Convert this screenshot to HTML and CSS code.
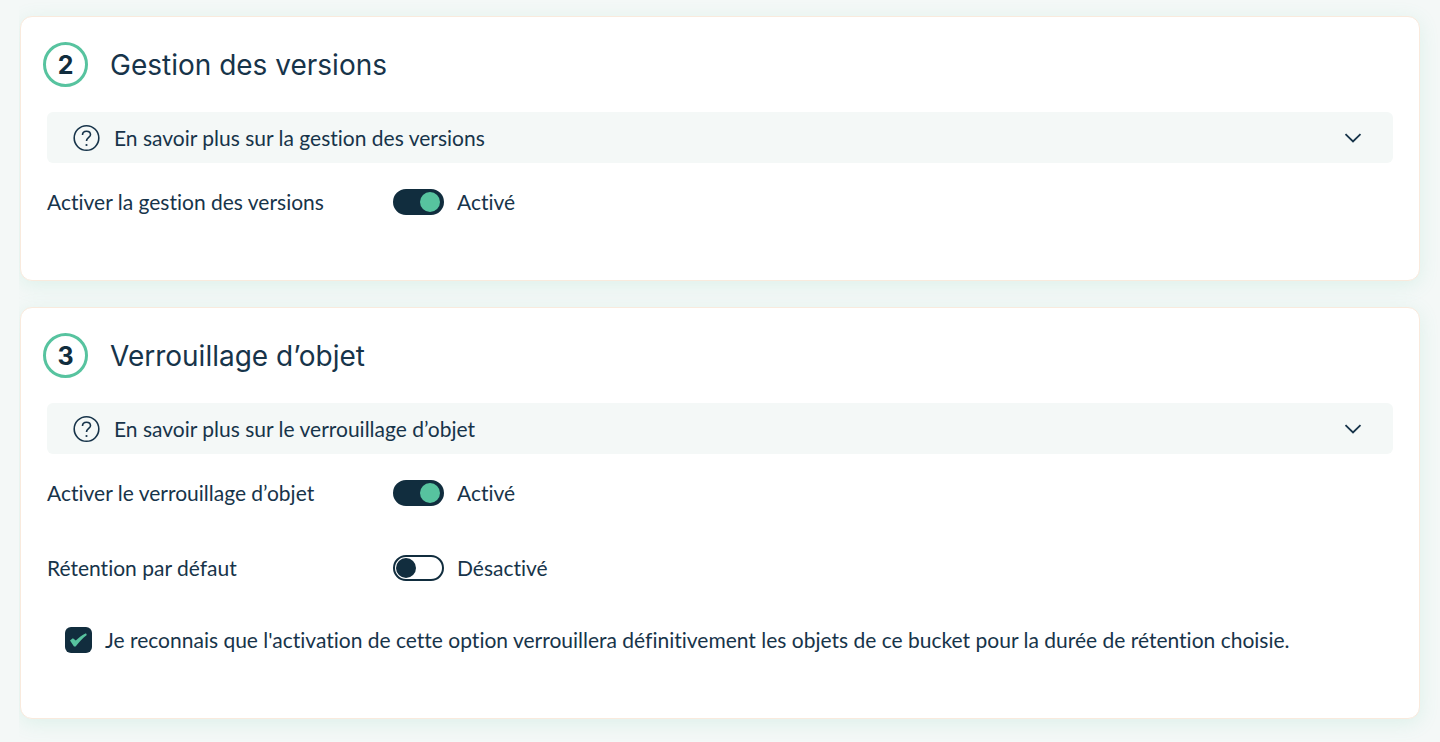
FILE: index.html
```html
<!DOCTYPE html>
<html lang="fr">
<head>
<meta charset="utf-8">
<title>Gestion des versions</title>
<link rel="stylesheet" href="styles.css">
</head>
<body>
<main class="steps">
  <section class="card">
    <header class="card-header">
      <span class="step">2</span>
      <h2 class="title">Gestion des versions</h2>
    </header>
    <button class="help" type="button" aria-expanded="false">
      <svg class="help-icon" viewBox="0 0 28 28" aria-hidden="true"><circle cx="13.500" cy="14" r="12.300"/><path d="M9.500 11C9.500 8.600 11.200 7.200 13.500 7.200S17.500 8.600 17.500 10.700C17.500 13.300 13.500 13.600 13.500 17"/><circle class="dot" cx="13.500" cy="21" r="1.100"/></svg>
      <span class="help-text">En savoir plus sur la gestion des versions</span>
      <svg class="chevron" viewBox="0 0 18 10" aria-hidden="true"><path d="M1.500 1.200 9 8.500 16.500 1.200"/></svg>
    </button>
    <div class="field">
      <label class="field-label" for="versions">Activer la gestion des versions</label>
      <input class="switch" type="checkbox" role="switch" id="versions" checked>
      <span class="state">Activé</span>
    </div>
  </section>
  <section class="card">
    <header class="card-header">
      <span class="step">3</span>
      <h2 class="title">Verrouillage d’objet</h2>
    </header>
    <button class="help" type="button" aria-expanded="false">
      <svg class="help-icon" viewBox="0 0 28 28" aria-hidden="true"><circle cx="13.500" cy="14" r="12.300"/><path d="M9.500 11C9.500 8.600 11.200 7.200 13.500 7.200S17.500 8.600 17.500 10.700C17.500 13.300 13.500 13.600 13.500 17"/><circle class="dot" cx="13.500" cy="21" r="1.100"/></svg>
      <span class="help-text">En savoir plus sur le verrouillage d’objet</span>
      <svg class="chevron" viewBox="0 0 18 10" aria-hidden="true"><path d="M1.500 1.200 9 8.500 16.500 1.200"/></svg>
    </button>
    <div class="field">
      <label class="field-label" for="lock">Activer le verrouillage d’objet</label>
      <input class="switch" type="checkbox" role="switch" id="lock" checked>
      <span class="state">Activé</span>
    </div>
    <div class="field">
      <label class="field-label" for="retention">Rétention par défaut</label>
      <input class="switch" type="checkbox" role="switch" id="retention">
      <span class="state">Désactivé</span>
    </div>
    <div class="consent">
      <span class="check">
        <input class="check-input" type="checkbox" id="ack" checked>
        <svg class="check-mark" viewBox="0 0 27 26" aria-hidden="true"><path d="M5 13.600 7.900 11.300 10.800 13.600C13.800 10.400 16.800 8 21 6.200L21.800 8C17.500 11.300 14.300 14.800 10.600 19.600L9 19.400Z"/></svg>
      </span>
      <label for="ack">Je reconnais que l'activation de cette option verrouillera définitivement les objets de ce bucket pour la durée de rétention choisie.</label>
    </div>
  </section>
</main>
</body>
</html>
```
FILE: styles.css
```css
* { box-sizing: border-box; }

body {
  margin: 0;
  background: #f4f8f7;
  color: #17344a;
  font-family: Lato, "Liberation Sans", sans-serif;
  font-size: 21px;
  font-variant-ligatures: none;
  line-height: 24px;
}

.steps {
  display: flex;
  flex-direction: column;
  gap: 26px;
  margin-left: 19px;
  padding: 16px 20px 23px 1px;
  overflow: hidden;
}

.card {
  padding: 25px 26px 65px;
  border: 1px solid #f9eadd;
  border-radius: 12px;
  background: #fff;
  box-shadow: 0 4px 20px rgba(87, 195, 159, 0.14);
}

.card-header {
  display: flex;
  align-items: center;
  gap: 22px;
  margin: 0 0 25px -4px;
}

.step {
  display: grid;
  place-items: center;
  width: 45px;
  height: 45px;
  border: 3px solid #57c39f;
  border-radius: 50%;
  color: #112d3e;
  font-family: Inter, sans-serif;
  font-size: 25px;
  font-weight: 700;
}

.title {
  margin: 0;
  font-family: Inter, sans-serif;
  font-size: 28px;
  font-weight: 400;
  line-height: 36px;
}

.help {
  display: flex;
  align-items: center;
  gap: 13px;
  width: 100%;
  height: 51px;
  margin: 0 0 26px;
  padding: 0 31px 0 26px;
  border: 0;
  border-radius: 6px;
  background: #f4f8f7;
  color: inherit;
  font: inherit;
  text-align: left;
}

.help-icon {
  flex: none;
  width: 28px;
  height: 28px;
  fill: none;
  stroke: #17344a;
  stroke-width: 1.600;
}

.help-icon .dot {
  fill: #17344a;
  stroke: none;
}

.help-text { flex: 1; }

.chevron {
  width: 18px;
  height: 10px;
  fill: none;
  stroke: #17344a;
  stroke-width: 1.800;
}

.field {
  display: flex;
  align-items: center;
  min-height: 26px;
}

.field + .field { margin-top: 49px; }

.field-label { flex: 0 0 346px; }

.switch {
  appearance: none;
  display: flex;
  align-items: center;
  width: 51px;
  height: 26px;
  margin: 0 13px 0 0;
  padding: 0 2px 0 1px;
  border: 2px solid #112d3e;
  border-radius: 13px;
  background: #fff;
}

.switch::before {
  content: "";
  width: 20px;
  height: 20px;
  border-radius: 50%;
  background: #112d3e;
}

.switch:checked {
  justify-content: flex-end;
  background: #112d3e;
}

.switch:checked::before { background: #57c39f; }

.consent {
  display: flex;
  align-items: center;
  gap: 13px;
  margin-top: 46px;
  padding-left: 18px;
}

.check {
  display: grid;
  flex: none;
}

.check-input,
.check-mark {
  grid-area: 1 / 1;
  width: 27px;
  height: 26px;
  margin: 0;
}

.check-input {
  appearance: none;
  border-radius: 6px;
  background: #112d3e;
}

.check-mark {
  fill: #57c39f;
  pointer-events: none;
}
```
